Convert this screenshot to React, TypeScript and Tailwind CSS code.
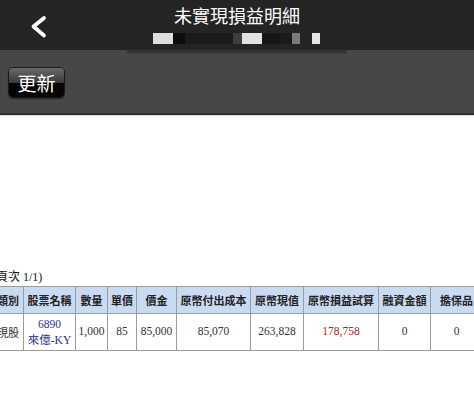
import React from 'react';

const cols = [
  { label: '類別', w: 31 },
  { label: '股票名稱', w: 52 },
  { label: '數量', w: 32 },
  { label: '單價', w: 29 },
  { label: '價金', w: 40 },
  { label: '原幣付出成本', w: 74 },
  { label: '原幣現值', w: 53 },
  { label: '原幣損益試算', w: 75 },
  { label: '融資金額', w: 52 },
  { label: '擔保品', w: 52 },
];

const sans = "font-['Noto_Sans_CJK_TC','Noto_Sans',sans-serif]";
const serif = "font-['Liberation_Serif','Noto_Sans_CJK_TC',serif]";

export default function App() {
  return (
    <div className="w-[474px] h-[395px] overflow-hidden bg-white">
      {/* Top bar */}
      <div className="relative h-[50px] bg-[#242424]">
        <svg className="absolute left-[28px] top-[13px]" width="24" height="28" viewBox="0 0 24 28">
          <polyline points="16,5 5.5,13.5 16,22.5" fill="none" stroke="white" strokeWidth="3.8" strokeLinecap="round" strokeLinejoin="round" />
        </svg>
        <div className={`${sans} pt-[3px] text-center text-[18px] leading-[24px] text-white`}>未實現損益明細</div>
        {/* redacted subtitle */}
        <div className="mt-[6px] ml-[153px] flex h-[11px] items-stretch">
          <div className="w-[20px] bg-[#dedede]" />
          <div className="w-[12px] bg-[#0e0e0e]" />
          <div className="w-[48px] bg-[#1b1b1b]" />
          <div className="w-[9px] bg-[#3e3e3e]" />
          <div className="w-[20px] bg-[#e2e2e2]" />
          <div className="w-[18px] bg-[#161616]" />
          <div className="w-[12px] bg-[#1a1a1a]" />
          <div className="w-[8px] bg-[#7a7a7a]" />
          <div className="w-[12px]" />
          <div className="w-[8px] bg-[#e6e6e6]" />
        </div>
      </div>
      {/* Toolbar */}
      <div className="relative h-[63px] bg-[#474747] pt-[17px] pl-[8px]">
        <div className="absolute left-[127px] top-0 h-[3px] w-[220px] bg-[#2c2c2c] blur-[1px]" />
        <button className={`${sans} relative h-[31px] w-[57px] overflow-hidden rounded-[5px] border border-[#1a1a1a] text-[19px] leading-[29px] text-white shadow-[0_1px_1px_rgba(0,0,0,0.5)]`}>
          <span className="absolute inset-x-0 top-0 h-1/2 bg-gradient-to-b from-[#6a6a6a] to-[#3a3a3a]" />
          <span className="absolute inset-x-0 bottom-0 h-1/2 bg-[#050505]" />
          <span className="relative">更新</span>
        </button>
      </div>
      <div className="h-[2px] bg-[#2e2e2e]" />
      <div className="h-px bg-[#d8d8d8]" />

      {/* Content */}
      <div className="-ml-[8px] pt-[153px]">
        <div className={`${serif} text-[12px] font-normal leading-[16px] text-[#111]`}>(頁次 1/1)</div>
        <table className="mt-[1px] table-fixed border-collapse" style={{ width: 490 }}>
          <colgroup>
            {cols.map(c => (
              <col key={c.label} style={{ width: c.w }} />
            ))}
          </colgroup>
          <thead>
            <tr className="h-[27px] bg-[#c9dbf2]">
              {cols.map(c => (
                <th key={c.label} className={`${sans} whitespace-nowrap border border-[#9c9c9c] p-0 text-center text-[11px] font-bold text-[#222]`}>
                  {c.label}
                </th>
              ))}
            </tr>
          </thead>
          <tbody>
            <tr className={`${serif} h-[37px] text-center text-[11.5px] text-[#333]`}>
              <td className={`${sans} border border-[#9c9c9c] p-0 text-[11px]`}>現股</td>
              <td className="border border-[#9c9c9c] p-0 leading-[16px] text-[#2e2e8a]">
                6890
                <br />
                來億-KY
              </td>
              <td className="border border-[#9c9c9c] p-0">1,000</td>
              <td className="border border-[#9c9c9c] p-0">85</td>
              <td className="border border-[#9c9c9c] p-0">85,000</td>
              <td className="border border-[#9c9c9c] p-0">85,070</td>
              <td className="border border-[#9c9c9c] p-0">263,828</td>
              <td className="border border-[#9c9c9c] p-0 text-[#9a2b2b]">178,758</td>
              <td className="border border-[#9c9c9c] p-0">0</td>
              <td className="border border-[#9c9c9c] p-0">0</td>
            </tr>
          </tbody>
        </table>
      </div>
    </div>
  );
}
